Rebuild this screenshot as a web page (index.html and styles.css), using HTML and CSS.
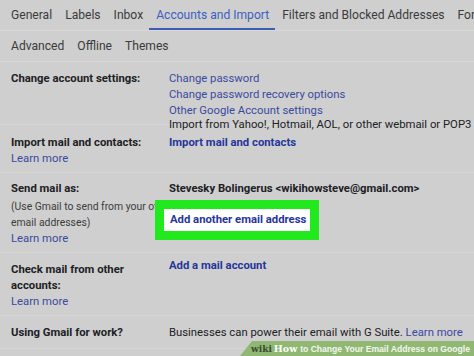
FILE: index.html
```html
<!DOCTYPE html>
<html lang="en">
<head>
    <meta charset="UTF-8">
    <title>Settings - Accounts and Import</title>
    <link rel="stylesheet" href="styles.css">
</head>
<body>
    <div class="tabs">
        <a class="tab">General</a>
        <a class="tab">Labels</a>
        <a class="tab">Inbox</a>
        <a class="tab active">Accounts and Import</a>
        <a class="tab">Filters and Blocked Addresses</a>
        <a class="tab">Forwarding and POP/IMAP</a>
    </div>
    <div class="tabs">
        <a class="tab">Advanced</a>
        <a class="tab">Offline</a>
        <a class="tab">Themes</a>
    </div>

    <div class="section account">
        <div class="label">Change account settings:</div>
        <div class="value">
            <a class="link">Change password</a>
            <a class="link">Change password recovery options</a>
            <a class="link">Other Google Account settings</a>
        </div>
    </div>

    <div class="section import">
        <div class="label">
            Import mail and contacts:
            <a class="link">Learn more</a>
        </div>
        <div class="value lift">
            <div class="line">Import from Yahoo!, Hotmail, AOL, or other webmail or POP3 accounts.</div>
            <a class="link strong">Import mail and contacts</a>
        </div>
    </div>

    <div class="section send">
        <div class="label">
            Send mail as:
            <div class="note">(Use Gmail to send from your other<br>email addresses)</div>
            <a class="link">Learn more</a>
        </div>
        <div class="value">
            <div class="line strong-text">Stevesky Bolingerus &lt;wikihowsteve@gmail.com&gt;</div>
            <div class="highlight">
                <a class="link strong">Add another email address</a>
            </div>
        </div>
    </div>

    <div class="section check">
        <div class="label">
            Check mail from other<br>accounts:
            <a class="link">Learn more</a>
        </div>
        <div class="value nudge">
            <a class="link strong">Add a mail account</a>
        </div>
    </div>

    <div class="section work">
        <div class="label">Using Gmail for work?</div>
        <div class="value">
            <div class="line">Businesses can power their email with G Suite. <a class="link inline">Learn more</a></div>
        </div>
    </div>

    <div class="watermark">
        <span class="wiki">wiki</span><span class="how">How</span>
        <span class="caption">to Change Your Email Address on Google</span>
    </div>
</body>
</html>
```

FILE: styles.css
```css
body {
    margin: 0;
    background-color: #cfcfcf;
    font-family: Roboto, "Liberation Sans", sans-serif;
    font-size: 11.3px;
    line-height: 16px;
    color: #202124;
    overflow: hidden;
    height: 356px;
    position: relative;
}

/* tab strip */
.tabs {
    display: flex;
    gap: 13px;
    padding: 0 0 0 11px;
    height: 30px;
    border-bottom: 1px solid #d8d8d8;
    white-space: nowrap;
    overflow: hidden;
}

.tab {
    font-size: 12.1px;
    line-height: 30px;
    color: #3a3b3d;
    position: relative;
}

.tab.active {
    color: #3b5fc0;
}

.tab.active::after {
    content: "";
    position: absolute;
    left: -7px;
    right: -6px;
    bottom: 0;
    height: 2px;
    background-color: #3d5cb3;
}

/* setting rows */
.section {
    display: flex;
    padding: 9px 0 5px 11px;
    border-bottom: 1px solid #d6d6d6;
}

.section.import {
    padding-top: 10px;
}

.section.send {
    padding-top: 8px;
}

.section.work {
    padding-bottom: 7px;
}

.label {
    width: 158px;
    flex-shrink: 0;
    font-weight: bold;
    white-space: nowrap;
}

.value {
    flex: 1;
    white-space: nowrap;
}

.value.lift {
    margin-top: -18px;
}

.value.nudge {
    margin-top: -5px;
}

.link {
    display: block;
    color: #3a4a9e;
    text-decoration: none;
    font-weight: normal;
}

.link.strong {
    font-weight: bold;
    color: #26359b;
    margin-top: 1px;
}

.lift .link.strong {
    margin-top: 2px;
}

.link.inline {
    display: inline;
}

.line {
    font-weight: normal;
}

.strong-text {
    font-weight: bold;
}

.note {
    font-weight: normal;
    font-size: 10.4px;
    color: #3c3c3c;
    margin-top: 2px;
}

.highlight {
    position: relative;
    margin: 3px 0 0 -14px;
    width: 146px;
    border: 9px solid #22e81e;
    background-color: #ffffff;
    padding: 3px 0;
}

.highlight .link {
    margin: 0;
    padding-left: 6px;
}

/* wikiHow caption strip */
.watermark {
    position: absolute;
    left: 240px;
    right: 0;
    bottom: 0;
    height: 15px;
    background-color: #90b873;
    clip-path: polygon(12px 0, 100% 0, 100% 100%, 0 100%);
    padding-left: 11px;
    line-height: 15px;
    white-space: nowrap;
}

.wiki {
    font-family: "DejaVu Serif", serif;
    font-weight: bold;
    font-size: 9px;
    color: #3b4a34;
}

.how {
    font-family: "DejaVu Serif", serif;
    font-weight: bold;
    font-size: 9.5px;
    color: #ffffff;
    margin-left: 2px;
}

.caption {
    font-family: "Liberation Sans", sans-serif;
    font-weight: bold;
    font-size: 8.6px;
    color: #f4f7ef;
}
```
